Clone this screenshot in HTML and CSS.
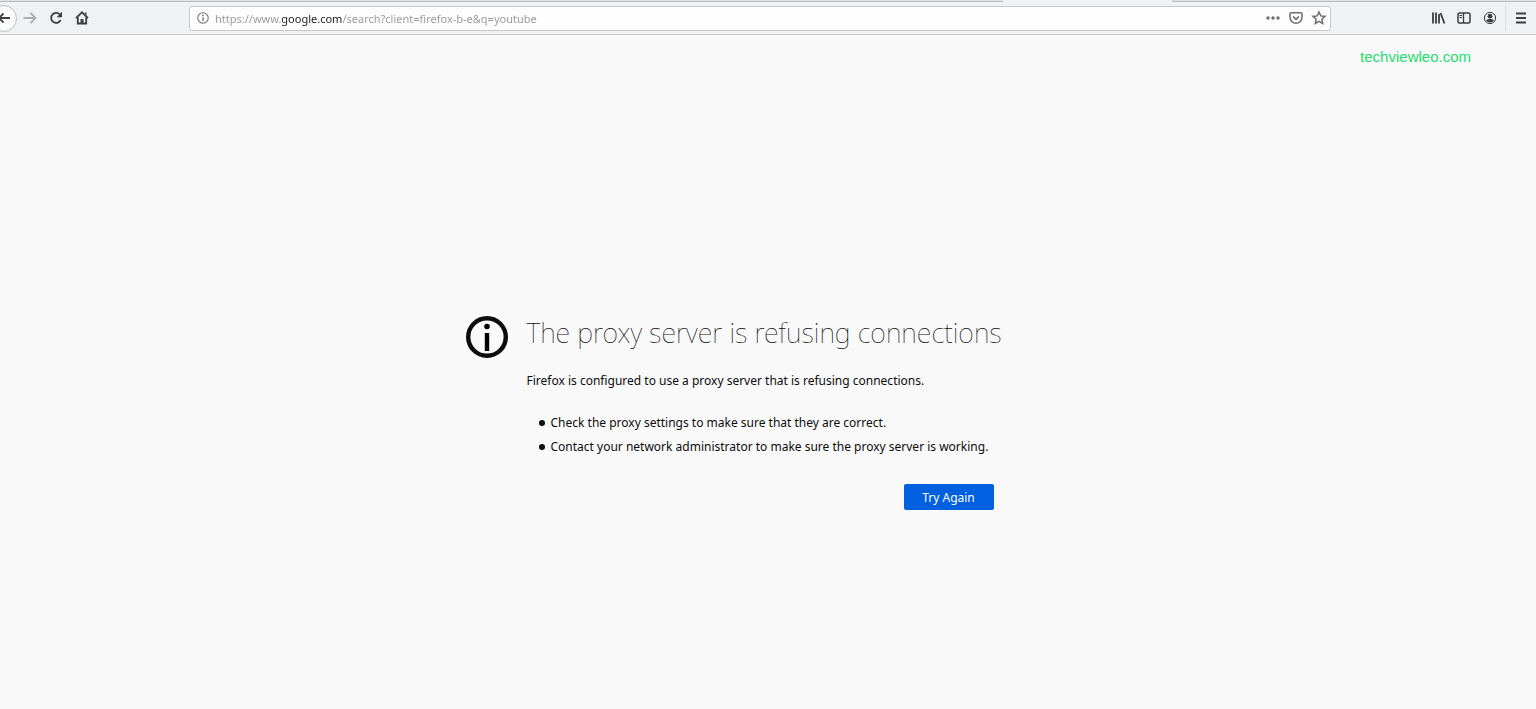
FILE: index.html
```
<!DOCTYPE html>
<html lang="en">
<head>
  <meta charset="UTF-8">
  <meta name="viewport" content="width=device-width, initial-scale=1.0">
  <title>Problem loading page</title>
  <link rel="stylesheet" href="styles.css">
</head>
<body>
  <header class="browser">
    <div class="tab-strip">
      <div class="tab tab-before"></div>
      <div class="tab tab-active"></div>
      <div class="tab tab-after"></div>
    </div>
    <nav class="toolbar">
      <div class="nav-buttons">
        <button class="icon-btn back-btn" aria-label="Back">
          <svg viewBox="0 0 16 16"><path d="M14 8H3M7.500 3.500L3 8l4.500 4.500"/></svg>
        </button>
        <button class="icon-btn forward-btn" aria-label="Forward" disabled>
          <svg viewBox="0 0 16 16"><path d="M1.500 8h12M8.500 3L13.500 8l-5 5"/></svg>
        </button>
        <button class="icon-btn" aria-label="Reload">
          <svg viewBox="0 0 16 16"><path d="M12.600 10.200A5 5 0 1 1 11.800 4.500"/><path class="solid" d="M14 1.800v5.400H8.600z"/></svg>
        </button>
        <button class="icon-btn" aria-label="Home">
          <svg viewBox="0 0 16 16"><path d="M2 8.200L8 2.300l6 5.900M3.800 7.500v6h8.400v-6"/><path class="solid" d="M6.500 9h3v5h-3zM11 2.500h1.500v3L11 4z"/></svg>
        </button>
      </div>

      <div class="url-bar">
        <button class="icon-btn small" aria-label="Site information">
          <svg viewBox="0 0 16 16"><circle cx="8" cy="8" r="6" stroke-width="1.200"/><path d="M8 7.200v4.300"/><circle class="solid" cx="8" cy="4.900" r="1"/></svg>
        </button>
        <input class="url-input" type="text" aria-label="Address" spellcheck="false" value="https://www.google.com/search?client=firefox-b-e&amp;q=youtube">
        <button class="icon-btn small" aria-label="Page actions">
          <svg viewBox="0 0 16 16"><g class="solid"><circle cx="3" cy="8" r="1.700"/><circle cx="8" cy="8" r="1.700"/><circle cx="13" cy="8" r="1.700"/></g></svg>
        </button>
        <button class="icon-btn small" aria-label="Save to Pocket">
          <svg viewBox="0 0 16 16"><path d="M3 2.800h10q1 0 1 1v3.500a6 6 0 0 1-12 0V3.800q0-1 1-1z"/><path d="M5 6.500L8 9.400l3-2.900"/></svg>
        </button>
        <button class="icon-btn small" aria-label="Bookmark this page">
          <svg viewBox="0 0 16 16"><path d="M8 2l1.800 3.900 4.200.5-3.100 2.900.8 4.200L8 11.400l-3.700 2.100.8-4.200L2 6.400l4.200-.5z"/></svg>
        </button>
      </div>

      <div class="tool-buttons">
        <button class="icon-btn" aria-label="Library">
          <svg viewBox="0 0 16 16"><path d="M3 2.500v11M6 2.500v11M9 4v9.500M10.500 3l4 10.500"/></svg>
        </button>
        <button class="icon-btn" aria-label="Sidebars">
          <svg viewBox="0 0 16 16"><rect x="2" y="3" width="12" height="10" rx="1.500" stroke-width="1.500"/><path d="M7.500 3v10" stroke-width="1.300"/><path d="M3.500 5.500h2.500M3.500 7.500h2.500" stroke-width="1"/></svg>
        </button>
        <button class="icon-btn" aria-label="Account">
          <svg viewBox="0 0 16 16"><circle cx="8" cy="8" r="5.600" stroke-width="1"/><circle class="solid" cx="8" cy="6.200" r="2.400"/><path class="solid" d="M4 10.500q1-1.500 3-1.500h2q2 0 3 1.500-1.600 2.100-4 2.100t-4-2.100z"/></svg>
        </button>
      </div>
      <div class="menu-holder">
        <button class="icon-btn" aria-label="Open menu">
          <svg viewBox="0 0 16 16"><path d="M3 3.500h10M3 8h10M3 12.500h10"/></svg>
        </button>
      </div>
    </nav>
  </header>

  <div class="watermark">techviewleo.com</div>

  <main class="error-page">
    <svg class="info-icon" viewBox="0 0 42 42" aria-hidden="true">
      <circle cx="21" cy="21" r="18.800" fill="none" stroke="#0c0c0d" stroke-width="4.400"/>
      <circle cx="21" cy="10.500" r="2.800"/>
      <path d="M18.800 17h4.400v18h-4.400z"/>
    </svg>
    <div class="error-text">
      <h1>The proxy server is refusing connections</h1>
      <p>Firefox is configured to use a proxy server that is refusing connections.</p>
      <ul>
        <li>Check the proxy settings to make sure that they are correct.</li>
        <li>Contact your network administrator to make sure the proxy server is working.</li>
      </ul>
      <div class="actions">
        <button class="try-again">Try Again</button>
      </div>
    </div>
  </main>
</body>
</html>
```

FILE: styles.css
```
* {
  margin: 0;
  padding: 0;
  box-sizing: border-box;
}

body {
  min-height: 100vh;
  display: flex;
  flex-direction: column;
  font-family: "Noto Sans", "Open Sans", sans-serif;
  font-size: 12px;
  color: #0c0c0d;
  background-color: #f9f9f9;
}

button {
  font-family: inherit;
  border: none;
  background: none;
  cursor: pointer;
}

.tab-strip {
  display: flex;
  height: 2px;
}

.tab {
  background-color: #dfe1e2;
  border-bottom: 1px solid #b9bbbb;
}

.tab-before {
  flex: 1003;
}

.tab-active {
  flex: 169;
  background-color: #f0f1f4;
  border: none;
}

.tab-after {
  flex: 364;
}

.toolbar {
  display: flex;
  align-items: center;
  height: 33px;
  background-color: #f0f1f3;
  border-bottom: 1px solid #c9cbcb;
}

.nav-buttons {
  display: flex;
  align-items: center;
  width: 189px;
}

.icon-btn {
  display: flex;
  align-items: center;
  justify-content: center;
  flex: none;
  width: 26px;
  height: 26px;
  color: #3d3d40;
}

.icon-btn svg {
  width: 16px;
  height: 16px;
  fill: none;
  stroke: currentColor;
  stroke-width: 1.8;
}

.icon-btn .solid {
  fill: currentColor;
  stroke: none;
}

.back-btn {
  margin-left: -10px;
  width: 27px;
  height: 27px;
  border: 1px solid #bbbdbd;
  border-radius: 50%;
  background-color: #fcfcfc;
}

.forward-btn {
  color: #acadaf;
}

.url-bar {
  flex: 1;
  display: flex;
  align-items: center;
  height: 25px;
  background-color: #fdfdfd;
  border: 1px solid #c6c7c7;
  border-radius: 3px;
}

.icon-btn.small {
  width: 23px;
  height: 23px;
  color: #6e6e70;
}

.icon-btn.small svg {
  stroke-width: 1.5;
}

.icon-btn.small:first-child {
  width: 25px;
}

.icon-btn.small:first-child svg {
  width: 14px;
  height: 14px;
}

/* the host name is darker than the rest of the address */
.url-input {
  flex: 1;
  min-width: 0;
  height: 23px;
  border: none;
  outline: none;
  font-family: inherit;
  font-size: 11px;
  color: transparent;
  background: linear-gradient(to right, #98989a 66px, #1c1c1e 66px, #1c1c1e 127px, #98989a 127px);
  -webkit-background-clip: text;
  background-clip: text;
}

.tool-buttons {
  display: flex;
  justify-content: flex-end;
  width: 172px;
}

.menu-holder {
  display: flex;
  justify-content: center;
  width: 31px;
  margin-left: 2px;
  border-left: 1px solid #dcddde;
}

.watermark {
  align-self: flex-end;
  margin: 13px 65px 0 0;
  font-family: "Liberation Sans", Arial, sans-serif;
  font-size: 15px;
  line-height: 17px;
  color: #25dd70;
}

.error-page {
  flex: 1;
  display: flex;
  align-items: flex-start;
  justify-content: center;
  gap: 19px;
  padding: 251px 74px 0 0;
}

.info-icon {
  flex: none;
  width: 42px;
  height: 42px;
}

.error-text {
  flex: 0 1 470px;
  min-width: 0;
}

h1 {
  font-size: 27px;
  font-weight: 100;
  line-height: 34px;
  white-space: nowrap;
  color: #0c0c0d;
}

p {
  margin-top: 19px;
  line-height: 24px;
}

ul {
  margin-top: 18px;
  padding-left: 12px;
  line-height: 24px;
  list-style: none;
}

li {
  display: flex;
  align-items: center;
  gap: 6px;
}

li::before {
  content: "";
  width: 6px;
  height: 6px;
  border-radius: 50%;
  background-color: #0c0c0d;
}

.actions {
  display: flex;
  justify-content: flex-end;
  margin-top: 25px;
  padding-right: 3px;
}

.try-again {
  width: 90px;
  height: 26px;
  font-size: 12px;
  color: #fff;
  background-color: #0060df;
  border-radius: 2px;
}

.try-again:hover {
  background-color: #003eaa;
}
```
